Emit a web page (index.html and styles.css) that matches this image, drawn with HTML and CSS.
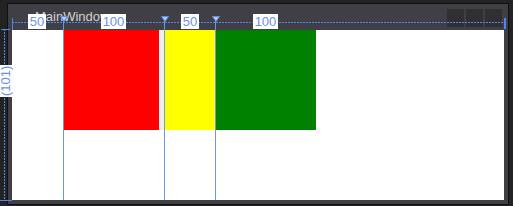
FILE: index.html
```html
<!DOCTYPE html>
<html>
<head>
<meta charset="utf-8">
<link rel="stylesheet" href="styles.css">
</head>
<body>
<div class="stage">
  <div class="window">
    <div class="titlebar">
      <span class="title">MainWindow</span>
      <div class="buttons">
        <span class="btn"></span><span class="btn"></span><span class="btn"></span>
      </div>
    </div>
    <div class="client">
      <div class="cell"></div>
      <div class="cell red"></div>
      <div class="cell splitter"></div>
      <div class="cell yellow"></div>
      <div class="cell green"></div>
    </div>
  </div>

  <div class="hruler"></div>
  <div class="tick tick-left"></div>
  <div class="tick tick-right"></div>

  <div class="guide g1"></div>
  <div class="guide g2"></div>
  <div class="guide g3"></div>

  <svg class="marker m1" width="8" height="6" viewBox="0 0 8 6"><polygon points="0.5,0.5 7.5,0.5 4,5.5" fill="#b4c8f2" stroke="#5d8ee8" stroke-width="1"/></svg>
  <svg class="marker m2" width="8" height="6" viewBox="0 0 8 6"><polygon points="0.5,0.5 7.5,0.5 4,5.5" fill="#b4c8f2" stroke="#5d8ee8" stroke-width="1"/></svg>
  <svg class="marker m3" width="8" height="6" viewBox="0 0 8 6"><polygon points="0.5,0.5 7.5,0.5 4,5.5" fill="#b4c8f2" stroke="#5d8ee8" stroke-width="1"/></svg>

  <span class="label l1">50</span>
  <span class="label l2">100</span>
  <span class="label l3">50</span>
  <span class="label l4">100</span>

  <div class="vcap vcap-top"></div>
  <div class="vruler"></div>
  <div class="vcap vcap-bottom"></div>
  <span class="vlabel">(101)</span>
</div>
</body>
</html>
```

FILE: styles.css
```css
html, body {
  margin: 0;
  padding: 0;
  background: #232324;
}
.stage {
  position: relative;
  box-sizing: border-box;
  width: 513px;
  height: 206px;
  padding: 3px 0 0 7px;
  overflow: hidden;
  font-family: "Liberation Sans", Arial, sans-serif;
}
.window {
  border: 1px solid #101011;
  background: #3f3f45;
  padding: 0 4px 4px 4px;
  box-sizing: content-box;
  width: 492px;
}
.titlebar {
  height: 26px;
  display: flex;
  align-items: flex-start;
  justify-content: space-between;
}
.title {
  margin: 6px 0 0 23px;
  font-size: 13px;
  line-height: 14px;
  color: #d4d4d4;
}
.buttons {
  display: flex;
  gap: 2px;
  margin: 5px 2px 0 0;
}
.btn {
  width: 17px;
  height: 18px;
  background: #2f2f34;
}
.client {
  height: 170px;
  background: #ffffff;
  display: grid;
  grid-template-columns: 52px 95px 6px 51px 100px;
  grid-template-rows: 100px;
}
.red { background: #ff0000; }
.splitter { background: #f0f0f0; }
.yellow { background: #ffff00; }
.green { background: #008000; }

.hruler {
  position: absolute;
  left: 12px;
  top: 22px;
  width: 492px;
  height: 1px;
  background: repeating-linear-gradient(to right, #4f87f2 0 2px, transparent 2px 3px);
}
.tick {
  position: absolute;
  background: #4f87f2;
}
.tick-left { left: 12px; top: 18px; width: 1px; height: 12px; }
.tick-right { left: 504px; top: 18px; width: 2px; height: 11px; }

.guide {
  position: absolute;
  top: 18px;
  width: 1px;
  height: 182px;
  background: #6a95e8;
}
.g1 { left: 63px; }
.g2 { left: 164px; }
.g3 { left: 215px; }

.marker {
  position: absolute;
  top: 16px;
  display: block;
}
.m1 { left: 60px; }
.m2 { left: 161px; }
.m3 { left: 212px; }

.label {
  position: absolute;
  top: 14px;
  height: 15px;
  background: #ffffff;
  color: #6c92e6;
  font-size: 13px;
  line-height: 15px;
  text-align: center;
}
.l1 { left: 28px; width: 18px; }
.l2 { left: 101px; width: 25px; }
.l3 { left: 181px; width: 18px; }
.l4 { left: 253px; width: 25px; }

.vcap {
  position: absolute;
  height: 1px;
  background: #4f87f2;
}
.vcap-top { left: 1px; top: 29px; width: 9px; }
.vcap-bottom { left: 0; top: 200px; width: 12px; }
.vruler {
  position: absolute;
  left: 4px;
  top: 29px;
  width: 1px;
  height: 171px;
  background: repeating-linear-gradient(to bottom, #4f87f2 0 2px, transparent 2px 3px);
}
.vlabel {
  position: absolute;
  left: 0;
  top: 65px;
  width: 12px;
  height: 32px;
  background: #ffffff;
  color: #6c92e6;
  font-size: 13px;
  line-height: 12px;
  writing-mode: vertical-rl;
  transform: rotate(180deg);
  text-align: center;
}
```
